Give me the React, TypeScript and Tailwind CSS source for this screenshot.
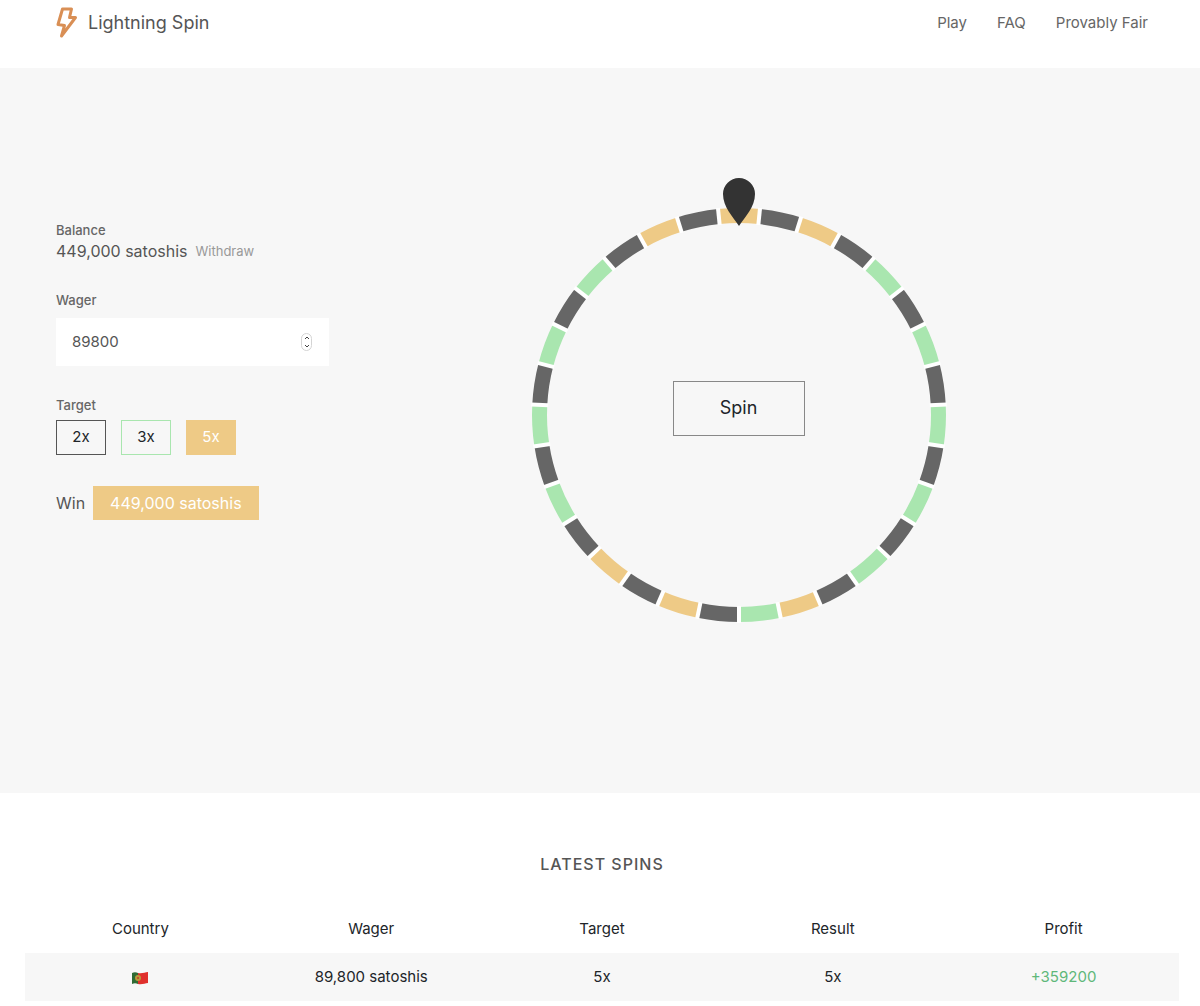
import React, { useState } from 'react';

type Multiplier = 2 | 3 | 5;

const SEGMENTS: Multiplier[] = [
  5, 2, 5, 2, 3, 2, 3, 2, 3, 2, 3, 2, 3, 2, 5, 3,
  2, 5, 2, 5, 2, 3, 2, 3, 2, 3, 2, 3, 2, 5, 2,
];

const SEGMENT_FILL: Record<Multiplier, string> = {
  2: 'fill-[#666666]',
  3: 'fill-[#a9e6af]',
  5: 'fill-[#eeca86]',
};

const TARGETS: { value: Multiplier; idle: string; active: string }[] = [
  { value: 2, idle: 'border-[#555555] text-[#212529]', active: 'border-[#666666] bg-[#666666] text-white' },
  { value: 3, idle: 'border-[#a9e6af] text-[#212529]', active: 'border-[#a9e6af] bg-[#a9e6af] text-white' },
  { value: 5, idle: 'border-[#eeca86] text-[#212529]', active: 'border-[#eeca86] bg-[#eeca86] text-white' },
];

const spins = [
  { country: 'Portugal', wager: '89,800 satoshis', target: '5x', result: '5x', profit: '+359200' },
];

const OUTER = 207;
const INNER = 192;
const STEP = (2 * Math.PI) / SEGMENTS.length;

function point(radius: number, angle: number) {
  return `${(radius * Math.sin(angle)).toFixed(2)} ${(-radius * Math.cos(angle)).toFixed(2)}`;
}

function segmentPath(index: number) {
  const start = (index - 0.5) * STEP;
  const end = start + STEP;
  return `M${point(OUTER, start)}A${OUTER} ${OUTER} 0 0 1 ${point(OUTER, end)}L${point(INNER, end)}A${INNER} ${INNER} 0 0 0 ${point(INNER, start)}Z`;
}

function dividerPath(index: number) {
  const angle = (index + 0.5) * STEP;
  return `M${point(INNER - 1, angle)}L${point(OUTER + 1, angle)}`;
}

function Wheel() {
  return (
    <svg viewBox="-210 -238 420 448" className="col-start-1 row-start-1 w-[420px]" aria-hidden="true">
      {SEGMENTS.map((value, i) => (
        <path key={i} d={segmentPath(i)} className={SEGMENT_FILL[value]} />
      ))}
      {SEGMENTS.map((_, i) => (
        <path key={i} d={dividerPath(i)} className="stroke-white" strokeWidth="4" />
      ))}
      <path d="M0 -189C-6 -198 -16 -208 -16 -221A16 16 0 0 1 16 -221C16 -208 6 -198 0 -189Z" className="fill-[#333333]" />
    </svg>
  );
}

function BoltLogo() {
  return (
    <svg viewBox="0 0 22 32" className="h-8 w-[22px]" fill="none" aria-hidden="true">
      <path
        d="M6.5 2H15.5L13.5 10.5H19.5L5.5 29L8.5 18.5L2 17.5Z"
        stroke="#d98f55"
        strokeWidth="3"
        strokeLinejoin="round"
      />
    </svg>
  );
}

function PortugalFlag() {
  return (
    <svg viewBox="0 0 18 14" className="inline-block h-[14px] w-[18px]" role="img" aria-label="Portugal">
      <path d="M1 2C3 1 5 1 7 2V13C5 12 3 12 1 13Z" fill="#2f6b34" />
      <path d="M7 2C11 3 14 1 17 1V12C14 12 11 14 7 13Z" fill="#e0302c" />
      <circle cx="7" cy="7" r="3" fill="#b99a3b" />
      <circle cx="7" cy="7" r="1" fill="#c43a2c" />
    </svg>
  );
}

export default function App() {
  const [wager, setWager] = useState(89800);
  const [target, setTarget] = useState<Multiplier>(5);

  return (
    <div className="bg-white font-['Inter',sans-serif] text-[#212529]">
      <header className="flex h-[68px] items-start justify-between pr-[52px] pl-14">
        <a href="#" className="flex h-[46px] items-center gap-[10px] text-lg text-[#555555]">
          <BoltLogo />
          Lightning Spin
        </a>
        <nav className="flex h-[46px] items-center gap-[30px] text-[15px] text-[#666666]">
          <a href="#play">Play</a>
          <a href="#faq">FAQ</a>
          <a href="#fair">Provably Fair</a>
        </nav>
      </header>

      <main className="flex bg-[#f7f7f7] pt-[109px] pr-[52px] pb-[168px] pl-14 text-[#555555]">
        <form className="w-1/4 pt-11" onSubmit={(e) => e.preventDefault()}>
          <p className="text-[13px] leading-[18px] font-medium text-[#666666]">Balance</p>
          <p className="flex items-center gap-2 text-base leading-6">
            449,000 satoshis
            <button type="button" className="text-[13px] text-[#999999]">Withdraw</button>
          </p>

          <label htmlFor="wager" className="mt-7 block text-[13px] leading-[18px] font-medium text-[#666666]">Wager</label>
          <div className="mt-[9px] flex h-12 items-center bg-white px-4">
            <input
              id="wager"
              type="number"
              value={wager}
              onChange={(e) => setWager(Number(e.target.value))}
              className="min-w-0 flex-1 appearance-none bg-transparent text-[15px] outline-none [-moz-appearance:textfield] [&::-webkit-inner-spin-button]:appearance-none"
            />
            <div className="mr-px flex h-[18px] w-[11px] flex-col rounded-full border border-[#d4d4d4]">
              <button type="button" aria-label="Increase wager" className="flex flex-1 items-center justify-center" onClick={() => setWager(wager + 1)}>
                <svg viewBox="0 0 6 4" className="h-1 w-[6px]" fill="none" stroke="#444444"><path d="M1 3L3 1L5 3" /></svg>
              </button>
              <button type="button" aria-label="Decrease wager" className="flex flex-1 items-center justify-center" onClick={() => setWager(wager - 1)}>
                <svg viewBox="0 0 6 4" className="h-1 w-[6px]" fill="none" stroke="#444444"><path d="M1 1L3 3L5 1" /></svg>
              </button>
            </div>
          </div>

          <fieldset className="mt-[30px]">
            <legend className="text-[13px] leading-[18px] font-medium text-[#666666]">Target</legend>
            <div className="mt-[6px] flex gap-[15px]">
              {TARGETS.map(({ value, idle, active }) => (
                <button
                  key={value}
                  type="button"
                  aria-pressed={target === value}
                  onClick={() => setTarget(value)}
                  className={`h-[35px] w-[50px] border text-[15px] ${target === value ? active : idle}`}
                >
                  {value}x
                </button>
              ))}
            </div>
          </fieldset>

          <p className="mt-[31px] flex items-center gap-2 text-base">
            Win
            <output className="bg-[#eeca86] px-[17px] leading-[34px] text-white">449,000 satoshis</output>
          </p>
        </form>

        <div className="grid flex-1 place-items-center">
          <Wheel />
          <button type="button" className="z-10 col-start-1 row-start-1 mt-[14px] h-[55px] w-[132px] border border-[#888888] text-lg text-[#212529]">
            Spin
          </button>
        </div>
      </main>

      <section className="pt-[59px] pr-[21px] pl-[25px]">
        <h2 className="text-center text-base font-medium tracking-[1px] text-[#555555]">LATEST SPINS</h2>
        <table className="mt-[29px] w-full table-fixed text-center text-[15px]">
          <thead>
            <tr className="h-12">
              {['Country', 'Wager', 'Target', 'Result', 'Profit'].map((heading) => (
                <th key={heading} scope="col" className="font-normal">{heading}</th>
              ))}
            </tr>
          </thead>
          <tbody>
            {spins.map((spin) => (
              <tr key={spin.country} className="h-12 bg-[#f7f7f7]">
                <td><PortugalFlag /></td>
                <td>{spin.wager}</td>
                <td>{spin.target}</td>
                <td>{spin.result}</td>
                <td className="text-[#5fb87a]">{spin.profit}</td>
              </tr>
            ))}
          </tbody>
        </table>
      </section>
    </div>
  );
}
